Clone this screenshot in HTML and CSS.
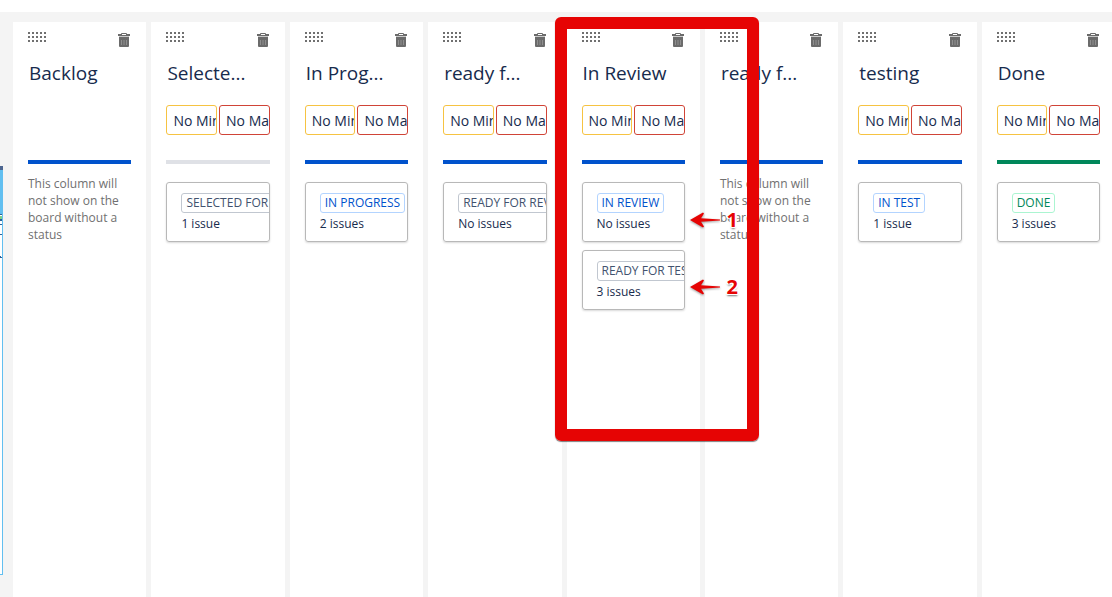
FILE: index.html
```html
<!DOCTYPE html>
<html lang="en">
<head>
  <meta charset="UTF-8">
  <meta name="viewport" content="width=device-width, initial-scale=1.0">
  <title>Board columns</title>
  <link rel="stylesheet" href="styles.css">
</head>
<body>
<svg class="sprite" aria-hidden="true">
  <symbol id="grip" viewBox="0 0 18 10">
    <path fill="#707070" d="M0 0h2v2H0zM4 0h2v2H4zM8 0h2v2H8zM12 0h2v2h-2zM16 0h2v2h-2zM0 4h2v2H0zM4 4h2v2H4zM8 4h2v2H8zM12 4h2v2h-2zM16 4h2v2h-2zM0 8h2v2H0zM4 8h2v2H4zM8 8h2v2H8zM12 8h2v2h-2zM16 8h2v2h-2z"/>
  </symbol>
  <symbol id="trash" viewBox="0 0 12 14">
    <path fill="#6b6b6b" fill-rule="evenodd" d="M3 1a1 1 0 0 1 1-1h4a1 1 0 0 1 1 1h3v2H0V1zM4 1v1h4V1z"/>
    <path fill="#c9c9c9" d="M1 3h10v1H1z"/>
    <path fill="#6b6b6b" d="M1 4h10v9a1 1 0 0 1-1 1H2a1 1 0 0 1-1-1z"/>
    <path fill="#8f8f8f" d="M3 7h1v5H3zM5.500 7h1v5h-1zM8 7h1v5H8z"/>
  </symbol>
  <symbol id="arrow" viewBox="0 0 30 16">
    <path fill="#e60404" d="M0 8 13 0.500 14 1.500 11 6.300 30 7.500V8.500L11 9.700 14 14.500 13 15.500z"/>
  </symbol>
</svg>

<main class="board">
  <section class="column">
    <div class="tools">
      <svg class="grip"><use href="#grip"/></svg>
      <button class="delete" aria-label="Delete Backlog"><svg><use href="#trash"/></svg></button>
    </div>
    <h2>Backlog</h2>
    <div class="limits"></div>
    <div class="bar blue"></div>
    <p class="hint">This column will not show on the board without a status</p>
  </section>

  <section class="column">
    <div class="tools">
      <svg class="grip"><use href="#grip"/></svg>
      <button class="delete" aria-label="Delete Selected"><svg><use href="#trash"/></svg></button>
    </div>
    <h2>Selecte...</h2>
    <div class="limits">
      <input class="min" type="text" value="No Min" aria-label="Minimum">
      <input class="max" type="text" value="No Max" aria-label="Maximum">
    </div>
    <div class="bar grey"></div>
    <div class="card">
      <span class="status">SELECTED FOR</span>
      <p>1 issue</p>
    </div>
  </section>

  <section class="column">
    <div class="tools">
      <svg class="grip"><use href="#grip"/></svg>
      <button class="delete" aria-label="Delete In Progress"><svg><use href="#trash"/></svg></button>
    </div>
    <h2>In Prog...</h2>
    <div class="limits">
      <input class="min" type="text" value="No Min" aria-label="Minimum">
      <input class="max" type="text" value="No Max" aria-label="Maximum">
    </div>
    <div class="bar blue"></div>
    <div class="card">
      <span class="status progress">IN PROGRESS</span>
      <p>2 issues</p>
    </div>
  </section>

  <section class="column">
    <div class="tools">
      <svg class="grip"><use href="#grip"/></svg>
      <button class="delete" aria-label="Delete ready for review"><svg><use href="#trash"/></svg></button>
    </div>
    <h2>ready f...</h2>
    <div class="limits">
      <input class="min" type="text" value="No Min" aria-label="Minimum">
      <input class="max" type="text" value="No Max" aria-label="Maximum">
    </div>
    <div class="bar blue"></div>
    <div class="card">
      <span class="status">READY FOR REV</span>
      <p>No issues</p>
    </div>
  </section>

  <section class="column">
    <div class="tools">
      <svg class="grip"><use href="#grip"/></svg>
      <button class="delete" aria-label="Delete In Review"><svg><use href="#trash"/></svg></button>
    </div>
    <h2>In Review</h2>
    <div class="limits">
      <input class="min" type="text" value="No Min" aria-label="Minimum">
      <input class="max" type="text" value="No Max" aria-label="Maximum">
    </div>
    <div class="bar blue"></div>
    <div class="card">
      <span class="status progress">IN REVIEW</span>
      <p>No issues</p>
    </div>
    <div class="card">
      <span class="status">READY FOR TES</span>
      <p>3 issues</p>
    </div>
    <div class="highlight"></div>
    <div class="marker first"><svg><use href="#arrow"/></svg><b>1</b></div>
    <div class="marker second"><svg><use href="#arrow"/></svg><b>2</b></div>
  </section>

  <section class="column">
    <div class="tools">
      <svg class="grip"><use href="#grip"/></svg>
      <button class="delete" aria-label="Delete ready for test"><svg><use href="#trash"/></svg></button>
    </div>
    <h2>ready f...</h2>
    <div class="limits"></div>
    <div class="bar blue"></div>
    <p class="hint">This column will not show on the board without a status</p>
  </section>

  <section class="column">
    <div class="tools">
      <svg class="grip"><use href="#grip"/></svg>
      <button class="delete" aria-label="Delete testing"><svg><use href="#trash"/></svg></button>
    </div>
    <h2>testing</h2>
    <div class="limits">
      <input class="min" type="text" value="No Min" aria-label="Minimum">
      <input class="max" type="text" value="No Max" aria-label="Maximum">
    </div>
    <div class="bar blue"></div>
    <div class="card">
      <span class="status progress">IN TEST</span>
      <p>1 issue</p>
    </div>
  </section>

  <section class="column">
    <div class="tools">
      <svg class="grip"><use href="#grip"/></svg>
      <button class="delete" aria-label="Delete Done"><svg><use href="#trash"/></svg></button>
    </div>
    <h2>Done</h2>
    <div class="limits">
      <input class="min" type="text" value="No Min" aria-label="Minimum">
      <input class="max" type="text" value="No Max" aria-label="Maximum">
    </div>
    <div class="bar green"></div>
    <div class="card">
      <span class="status done">DONE</span>
      <p>3 issues</p>
    </div>
  </section>
</main>

<svg class="panel-edge" viewBox="0 0 3 409" aria-hidden="true">
  <path fill="#fff" d="M0 0h3v409H0z"/>
  <path fill="#62bff0" d="M0 4h3v44H0zM2 48h1v361H2zM0 408h3v1H0z"/>
  <path fill="#4d6690" d="M0 0h3v4H0z"/>
  <path fill="#2c5f97" d="M0 48h2v1H0zM0 53h2v2H0zM0 58h2v1H0zM0 68h2v1H0zM0 90h1v1h1v1H0z"/>
  <path fill="#7fd18b" d="M0 50h2v3H0z"/>
</svg>
</body>
</html>
```

FILE: styles.css
```css
* { margin: 0; padding: 0; box-sizing: border-box; }
body {
  font-family: 'Segoe UI', 'Open Sans', 'Noto Sans', sans-serif;
  background: #f4f4f4;
  border-top: 12px solid #fff;
  min-height: 100vh;
  color: #172b4d;
  display: flex;
  overflow: hidden;
}
.sprite { display: none; }
.board {
  flex: 1;
  display: grid;
  grid-template-columns: repeat(8, minmax(0, 1fr));
  gap: 5px;
  margin: 10px -3px 0 13px;
}
.column {
  position: relative;
  background: #fff;
  padding: 10px 15px;
}
.tools {
  display: flex;
  justify-content: space-between;
  height: 28px;
}
.grip {
  width: 18px;
  height: 10px;
}
.delete {
  width: 12px;
  height: 14px;
  margin: 1px 1px 0 0;
  background: none;
  border: none;
  cursor: pointer;
}
.delete svg {
  display: block;
  width: 12px;
  height: 14px;
}
h2 {
  font-size: 19px;
  font-weight: 400;
  line-height: 27px;
  padding-left: 1px;
  white-space: nowrap;
}
.limits {
  display: grid;
  grid-template-columns: 1fr 1fr;
  gap: 2px;
  height: 30px;
  margin: 18px 0 25px;
}
.limits input {
  width: 100%;
  min-width: 0;
  padding-left: 6px;
  border: 1px solid #f6c342;
  border-radius: 3px;
  background: #fff;
  color: #172b4d;
  font: 14px 'Segoe UI', 'Open Sans', 'Noto Sans', sans-serif;
}
.limits .max { border-color: #d04437; }
.bar { height: 4px; }
.blue { background: #0052cc; }
.grey { background: #dfe1e6; }
.green { background: #00875a; }
.hint {
  margin-top: 11px;
  color: #707070;
  font-size: 12px;
  line-height: 17px;
}
.card {
  height: 60px;
  margin-top: 8px;
  padding: 10px 0 0 14px;
  border: 1px solid #b8b8b8;
  border-radius: 3px;
  box-shadow: 0 1px 2px rgba(0, 0, 0, 0.15);
  font-size: 12px;
  line-height: 18px;
  overflow: hidden;
}
.bar + .card { margin-top: 18px; }
.status {
  display: block;
  width: max-content;
  padding: 0 4px;
  border: 1px solid #c1c7d0;
  border-radius: 3px;
  color: #42526e;
}
.card p { margin-top: 2px; }
.progress {
  border-color: #b3d4ff;
  color: #0052cc;
}
.done {
  border-color: #abf5d1;
  color: #00875a;
}

/* annotations over the board */
.highlight {
  position: absolute;
  z-index: 1;
  top: -5px;
  left: -12px;
  width: 204px;
  height: 424px;
  border: 12px solid #e60404;
  border-radius: 6px;
  box-shadow: 0 1px 1px rgba(0, 0, 0, 0.5);
}
.marker {
  position: absolute;
  z-index: 2;
  left: 123px;
  display: flex;
  align-items: center;
  gap: 7px;
  color: #e60404;
  font-size: 20px;
  line-height: 24px;
  text-shadow: -1px -1px #fff, 1px -1px #fff, -1px 1px #fff, 1px 1px #fff, 2px 0 #fff, -2px 0 #fff, 0 2px 2px #777;
}
.marker svg {
  width: 30px;
  height: 16px;
  filter: drop-shadow(0 1px 1px rgba(0, 0, 0, 0.4));
}
.first { top: 186px; }
.second { top: 253px; }
.panel-edge {
  position: absolute;
  top: 166px;
  left: 0;
  width: 3px;
  height: 409px;
}
```
